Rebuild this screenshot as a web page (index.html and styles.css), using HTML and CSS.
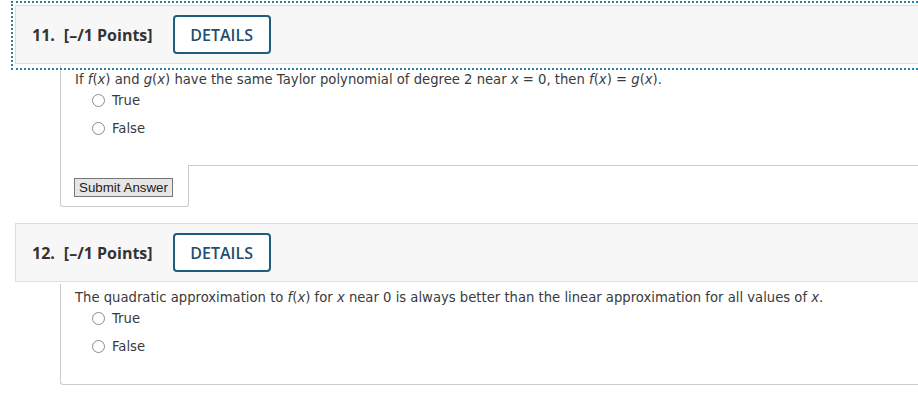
FILE: index.html
```html
<!DOCTYPE html>
<html lang="en">
<head>
<meta charset="utf-8">
<title>Questions</title>
<link rel="stylesheet" href="styles.css">
</head>
<body>
<div class="page">
  <section class="question">
    <div class="qhead-wrap focused">
      <div class="qhead">
        <span class="qnum">11.</span>
        <span class="qpts">[–/1 Points]</span>
        <button class="details">DETAILS</button>
      </div>
    </div>
    <div class="qbody">
      <div class="qmain">
        <p class="qtext">If <i>f</i>(<i>x</i>) and <i>g</i>(<i>x</i>) have the same Taylor polynomial of degree 2 near <i>x</i> = 0, then <i>f</i>(<i>x</i>) = <i>g</i>(<i>x</i>).</p>
        <ul class="options">
          <li><span class="radio"></span>True</li>
          <li><span class="radio"></span>False</li>
        </ul>
      </div>
      <div class="submit-row">
        <div class="submit-tab"><button class="submit">Submit Answer</button></div>
        <div class="submit-rest"></div>
      </div>
    </div>
  </section>

  <section class="question q-last">
    <div class="qhead-wrap">
      <div class="qhead">
        <span class="qnum">12.</span>
        <span class="qpts">[–/1 Points]</span>
        <button class="details">DETAILS</button>
      </div>
    </div>
    <div class="qbody">
      <div class="qmain qmain-closed">
        <p class="qtext">The quadratic approximation to <i>f</i>(<i>x</i>) for <i>x</i> near 0 is always better than the linear approximation for all values of <i>x</i>.</p>
        <ul class="options">
          <li><span class="radio"></span>True</li>
          <li><span class="radio"></span>False</li>
        </ul>
      </div>
    </div>
  </section>
</div>
</body>
</html>
```

FILE: styles.css
```css
html, body {
  margin: 0;
  padding: 0;
  background: #ffffff;
  overflow: hidden;
}

.page {
  padding-top: 5px;
  padding-left: 15px;
}

.question + .question {
  margin-top: 16px;
}

.qhead-wrap {
  padding-bottom: 2px;
}

.qhead-wrap.focused {
  outline: 2px dotted #2f7fa3;
  outline-offset: 2px;
}

.qhead {
  display: flex;
  align-items: center;
  box-sizing: border-box;
  height: 59px;
  padding: 0 16px;
  background: #f7f7f7;
  border: 1px solid #dedede;
  border-right: none;
  font-family: "Open Sans", "Liberation Sans", sans-serif;
  font-weight: 700;
  font-size: 16px;
  color: #333333;
}

.qnum {
  margin-right: 9px;
}

.details {
  margin-left: 20px;
  box-sizing: border-box;
  width: 98px;
  height: 39px;
  border: 2px solid #1e5d7e;
  border-radius: 4px;
  background: #ffffff;
  color: #1f4f6f;
  font-family: "Open Sans", "Liberation Sans", sans-serif;
  font-size: 16px;
  font-weight: 600;
  padding: 0;
}

.qbody {
  margin-left: 45px;
}

.qmain {
  border-left: 1px solid #cccccc;
  padding: 5px 0 26px 14px;
  font-family: "DejaVu Sans", Verdana, sans-serif;
  font-size: 13.2px;
  color: #3a3a3a;
}

.qmain-closed {
  border-bottom: 1px solid #cccccc;
  border-bottom-left-radius: 3px;
  padding-bottom: 27px;
}

.qtext {
  margin: 0;
  line-height: 18px;
}

.options {
  list-style: none;
  margin: 0;
  padding: 0 0 0 17px;
  display: flex;
  flex-direction: column;
  gap: 6px;
}

.options li {
  display: flex;
  align-items: center;
  height: 22px;
}

.radio {
  box-sizing: border-box;
  width: 13px;
  height: 13px;
  border: 1px solid #8c8c8c;
  border-radius: 50%;
  background: #ffffff;
  margin-right: 7px;
}

.submit-row {
  display: flex;
}

.submit-tab {
  box-sizing: border-box;
  width: 129px;
  padding: 13px 0 9px 13px;
  border-left: 1px solid #cccccc;
  border-right: 1px solid #cccccc;
  border-bottom: 1px solid #cccccc;
  border-radius: 0 0 3px 3px;
}

.submit {
  display: block;
  box-sizing: border-box;
  width: 99px;
  height: 19px;
  padding: 0;
  border: 1px solid #767676;
  background: #e6e6e6;
  font-family: "Liberation Sans", Arial, sans-serif;
  font-size: 13.33px;
  color: #222222;
}

.submit-rest {
  flex: 1;
  border-top: 1px solid #cccccc;
}
```
